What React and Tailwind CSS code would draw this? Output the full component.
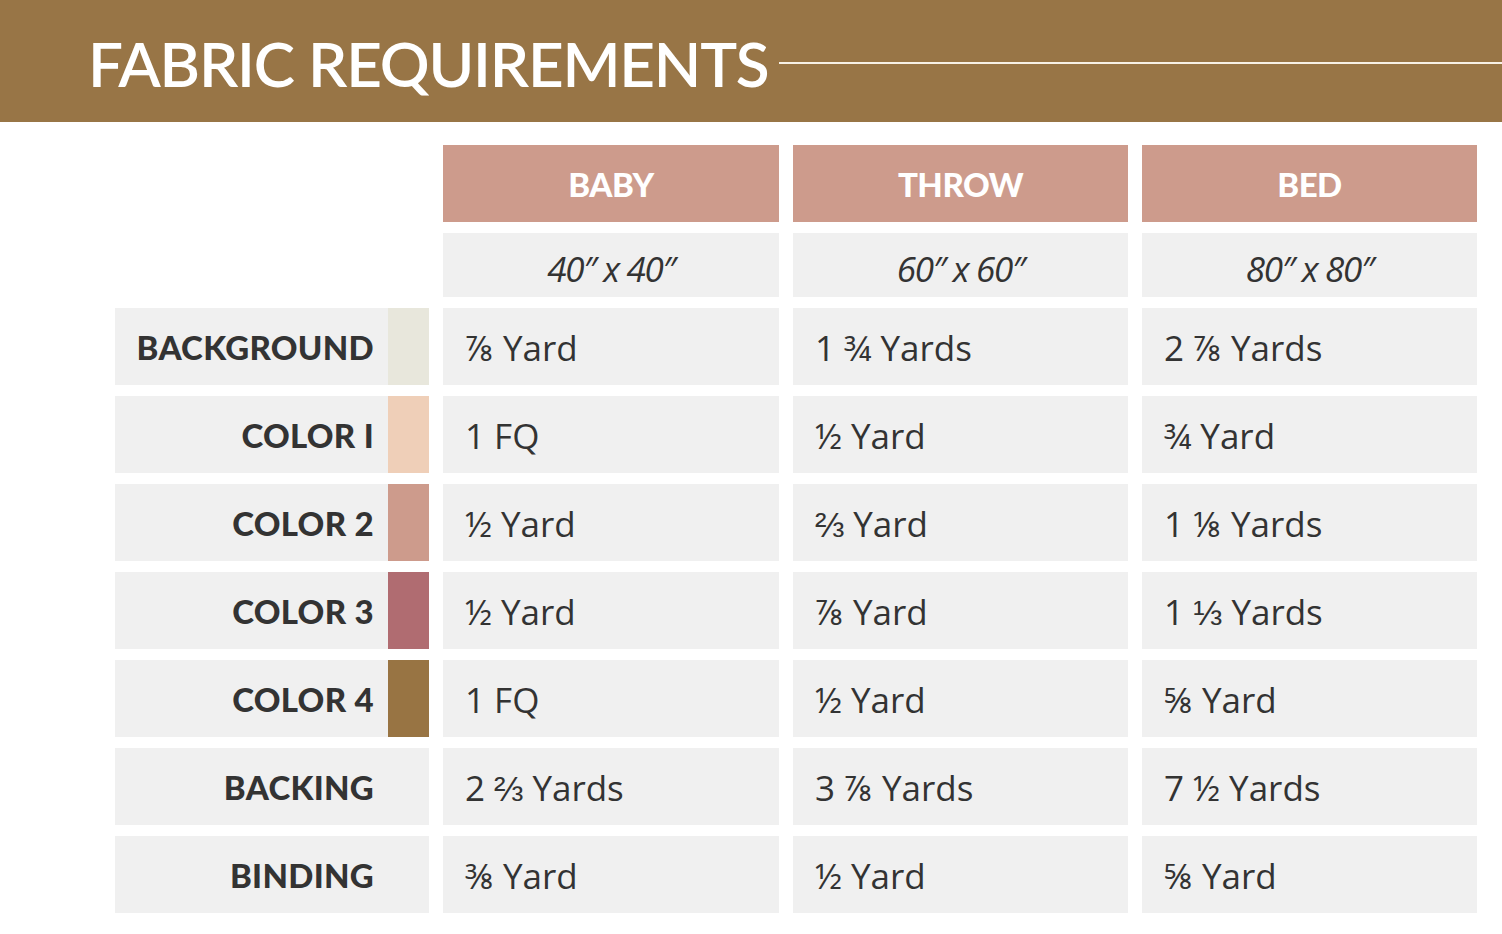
import React from "react";

const sizes = [
    { name: "BABY", dims: "40″ x 40″" },
    { name: "THROW", dims: "60″ x 60″" },
    { name: "BED", dims: "80″ x 80″" },
];

const rows = [
    { label: "BACKGROUND", swatch: "bg-[#e8e7dc]", values: ["⅞ Yard", "1 ¾ Yards", "2 ⅞ Yards"] },
    { label: "COLOR I", swatch: "bg-[#efcfb8]", values: ["1 FQ", "½ Yard", "¾ Yard"] },
    { label: "COLOR 2", swatch: "bg-[#cd9b8c]", values: ["½ Yard", "⅔ Yard", "1 ⅛ Yards"] },
    { label: "COLOR 3", swatch: "bg-[#b06c71]", values: ["½ Yard", "⅞ Yard", "1 ⅓ Yards"] },
    { label: "COLOR 4", swatch: "bg-[#987443]", values: ["1 FQ", "½ Yard", "⅝ Yard"] },
    { label: "BACKING", swatch: "", values: ["2 ⅔ Yards", "3 ⅞ Yards", "7 ½ Yards"] },
    { label: "BINDING", swatch: "", values: ["⅜ Yard", "½ Yard", "⅝ Yard"] },
];

export default function App() {
    return (
        <div className="w-[1502px] h-[934px] bg-white overflow-hidden">
            {/* title band */}
            <div className="h-[122px] bg-[#987546] flex items-center pl-[88px]">
                <h1 className="text-white text-[62px] leading-none font-semibold tracking-[-1.2px] font-['Lato',sans-serif] mt-[4px]">
                    FABRIC REQUIREMENTS
                </h1>
                <div className="flex-1 h-[2px] bg-[#f7f1e6] ml-[11px] mt-[4px]" />
            </div>

            {/* table */}
            <div className="ml-[115px] mt-[23px] grid grid-cols-[314px_336px_335px_335px] gap-x-[14px] gap-y-[11px]">
                <div />
                {sizes.map((s) => (
                    <div
                        key={s.name}
                        className="h-[77px] bg-[#cd9b8c] flex items-center justify-center pt-[3px] text-white text-[33px] font-black tracking-[-0.5px] font-['Lato',sans-serif]"
                    >
                        {s.name}
                    </div>
                ))}

                <div />
                {sizes.map((s) => (
                    <div
                        key={s.dims}
                        className="h-[64px] bg-[#f0f0f0] flex items-center justify-center pt-[8px] text-[#333] text-[35px] italic tracking-[-1.3px] font-['Open_Sans',sans-serif]"
                    >
                        {s.dims}
                    </div>
                ))}

                {rows.map((r) => (
                    <React.Fragment key={r.label}>
                        <div className="h-[77px] flex">
                            <div className="flex-1 bg-[#f0f0f0] flex items-center justify-end pr-[14px] pt-[3px] text-[#333] text-[33px] font-black tracking-[0.3px] font-['Lato',sans-serif]">
                                {r.label}
                            </div>
                            <div className={`w-[41px] ${r.swatch || "bg-[#f0f0f0]"}`} />
                        </div>
                        {r.values.map((v, i) => (
                            <div
                                key={i}
                                className="h-[77px] bg-[#f0f0f0] flex items-center pl-[22px] pt-[3px] text-[#333] text-[35px] font-['Open_Sans',sans-serif]"
                            >
                                {v}
                            </div>
                        ))}
                    </React.Fragment>
                ))}
            </div>
        </div>
    );
}
